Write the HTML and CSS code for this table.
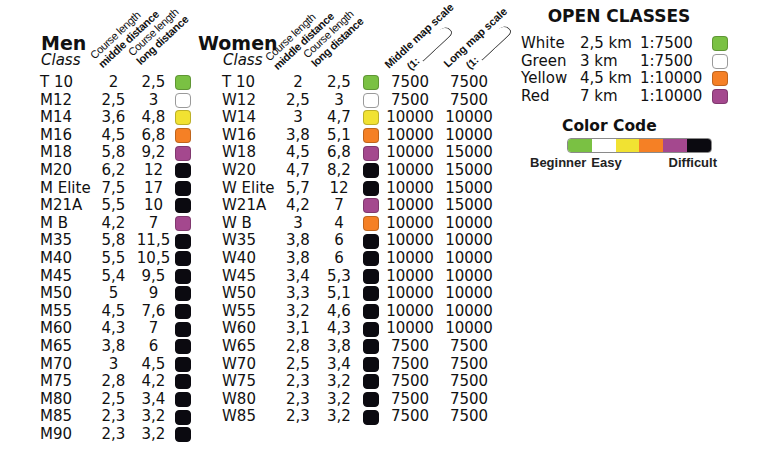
FILE: index.html
```html
<!DOCTYPE html>
<html>
<head>
<meta charset="utf-8">
<link rel="stylesheet" href="styles.css">
</head>
<body>
<div class="page">
  <div class="tbl men">
    <div class="head-title"><div class="big">Men</div><div class="sub">Class</div></div>
    <div class="rot"><div class="lab m-mid"><div class="l1">Course length</div><div class="l2">middle distance</div></div></div>
    <div class="rot"><div class="lab m-long"><div class="l1">Course length</div><div class="l2">long distance</div></div></div>
    <div></div>

    <div class="cls">T 10</div><div class="num">2</div><div class="num">2,5</div><div class="sw green"></div>
    <div class="cls">M12</div><div class="num">2,5</div><div class="num">3</div><div class="sw white"></div>
    <div class="cls">M14</div><div class="num">3,6</div><div class="num">4,8</div><div class="sw yellow"></div>
    <div class="cls">M16</div><div class="num">4,5</div><div class="num">6,8</div><div class="sw orange"></div>
    <div class="cls">M18</div><div class="num">5,8</div><div class="num">9,2</div><div class="sw purple"></div>
    <div class="cls">M20</div><div class="num">6,2</div><div class="num">12</div><div class="sw black"></div>
    <div class="cls">M Elite</div><div class="num">7,5</div><div class="num">17</div><div class="sw black"></div>
    <div class="cls">M21A</div><div class="num">5,5</div><div class="num">10</div><div class="sw black"></div>
    <div class="cls">M B</div><div class="num">4,2</div><div class="num">7</div><div class="sw purple"></div>
    <div class="cls">M35</div><div class="num">5,8</div><div class="num">11,5</div><div class="sw black"></div>
    <div class="cls">M40</div><div class="num">5,5</div><div class="num">10,5</div><div class="sw black"></div>
    <div class="cls">M45</div><div class="num">5,4</div><div class="num">9,5</div><div class="sw black"></div>
    <div class="cls">M50</div><div class="num">5</div><div class="num">9</div><div class="sw black"></div>
    <div class="cls">M55</div><div class="num">4,5</div><div class="num">7,6</div><div class="sw black"></div>
    <div class="cls">M60</div><div class="num">4,3</div><div class="num">7</div><div class="sw black"></div>
    <div class="cls">M65</div><div class="num">3,8</div><div class="num">6</div><div class="sw black"></div>
    <div class="cls">M70</div><div class="num">3</div><div class="num">4,5</div><div class="sw black"></div>
    <div class="cls">M75</div><div class="num">2,8</div><div class="num">4,2</div><div class="sw black"></div>
    <div class="cls">M80</div><div class="num">2,5</div><div class="num">3,4</div><div class="sw black"></div>
    <div class="cls">M85</div><div class="num">2,3</div><div class="num">3,2</div><div class="sw black"></div>
    <div class="cls">M90</div><div class="num">2,3</div><div class="num">3,2</div><div class="sw black"></div>
  </div>

  <div class="tbl women">
    <div class="head-title"><div class="big wbig">Women</div><div class="sub">Class</div></div>
    <div class="rot"><div class="lab w-mid"><div class="l1">Course length</div><div class="l2">middle distance</div></div></div>
    <div class="rot"><div class="lab w-long"><div class="l1">Course length</div><div class="l2">long distance</div></div></div>
    <div></div>
    <div class="rot"><div class="lab map map-mid"><div class="l2">Middle map scale</div><div class="l3">(1:<span class="brk"></span></div></div></div>
    <div class="rot"><div class="lab map map-long"><div class="l2">Long map scale</div><div class="l3">(1:<span class="brk"></span></div></div></div>

    <div class="cls">T 10</div><div class="num">2</div><div class="num">2,5</div><div class="sw green"></div><div class="num">7500</div><div class="num">7500</div>
    <div class="cls">W12</div><div class="num">2,5</div><div class="num">3</div><div class="sw white"></div><div class="num">7500</div><div class="num">7500</div>
    <div class="cls">W14</div><div class="num">3</div><div class="num">4,7</div><div class="sw yellow"></div><div class="num">10000</div><div class="num">10000</div>
    <div class="cls">W16</div><div class="num">3,8</div><div class="num">5,1</div><div class="sw orange"></div><div class="num">10000</div><div class="num">10000</div>
    <div class="cls">W18</div><div class="num">4,5</div><div class="num">6,8</div><div class="sw purple"></div><div class="num">10000</div><div class="num">15000</div>
    <div class="cls">W20</div><div class="num">4,7</div><div class="num">8,2</div><div class="sw black"></div><div class="num">10000</div><div class="num">15000</div>
    <div class="cls">W Elite</div><div class="num">5,7</div><div class="num">12</div><div class="sw black"></div><div class="num">10000</div><div class="num">15000</div>
    <div class="cls">W21A</div><div class="num">4,2</div><div class="num">7</div><div class="sw purple"></div><div class="num">10000</div><div class="num">15000</div>
    <div class="cls">W B</div><div class="num">3</div><div class="num">4</div><div class="sw orange"></div><div class="num">10000</div><div class="num">10000</div>
    <div class="cls">W35</div><div class="num">3,8</div><div class="num">6</div><div class="sw black"></div><div class="num">10000</div><div class="num">10000</div>
    <div class="cls">W40</div><div class="num">3,8</div><div class="num">6</div><div class="sw black"></div><div class="num">10000</div><div class="num">10000</div>
    <div class="cls">W45</div><div class="num">3,4</div><div class="num">5,3</div><div class="sw black"></div><div class="num">10000</div><div class="num">10000</div>
    <div class="cls">W50</div><div class="num">3,3</div><div class="num">5,1</div><div class="sw black"></div><div class="num">10000</div><div class="num">10000</div>
    <div class="cls">W55</div><div class="num">3,2</div><div class="num">4,6</div><div class="sw black"></div><div class="num">10000</div><div class="num">10000</div>
    <div class="cls">W60</div><div class="num">3,1</div><div class="num">4,3</div><div class="sw black"></div><div class="num">10000</div><div class="num">10000</div>
    <div class="cls">W65</div><div class="num">2,8</div><div class="num">3,8</div><div class="sw black"></div><div class="num">7500</div><div class="num">7500</div>
    <div class="cls">W70</div><div class="num">2,5</div><div class="num">3,4</div><div class="sw black"></div><div class="num">7500</div><div class="num">7500</div>
    <div class="cls">W75</div><div class="num">2,3</div><div class="num">3,2</div><div class="sw black"></div><div class="num">7500</div><div class="num">7500</div>
    <div class="cls">W80</div><div class="num">2,3</div><div class="num">3,2</div><div class="sw black"></div><div class="num">7500</div><div class="num">7500</div>
    <div class="cls">W85</div><div class="num">2,3</div><div class="num">3,2</div><div class="sw black"></div><div class="num">7500</div><div class="num">7500</div>
  </div>

  <div class="open">
    <div class="open-t">OPEN CLASSES</div>
    <div class="olist">
      <div>White</div><div>2,5 km</div><div>1:7500</div><div class="sw green"></div>
      <div>Green</div><div>3 km</div><div>1:7500</div><div class="sw white"></div>
      <div>Yellow</div><div>4,5 km</div><div>1:10000</div><div class="sw orange"></div>
      <div>Red</div><div>7 km</div><div>1:10000</div><div class="sw purple"></div>
    </div>
    <div class="cc-t">Color Code</div>
    <div class="bar">
      <div class="seg green"></div><div class="seg white"></div><div class="seg yellow"></div><div class="seg orange"></div><div class="seg purple"></div><div class="seg black"></div>
    </div>
    <div class="bar-labels"><span>Beginner</span><span class="easy">Easy</span><span class="diff">Difficult</span></div>
  </div>
</div>
</body>
</html>
```

FILE: styles.css
```css
body {
  margin: 0;
  background: #fff;
  font-family: "DejaVu Sans", sans-serif;
  font-size: 15px;
  color: #111;
}
.page {
  display: flex;
  align-items: flex-start;
  width: 768px;
  height: 452px;
  padding-left: 40px;
  box-sizing: border-box;
  overflow: hidden;
}
.tbl {
  display: grid;
  grid-template-rows: 74px;
  grid-auto-rows: 17.6px;
  align-items: center;
  line-height: 17.6px;
}
.men {
  grid-template-columns: 55px 37px 43px 16px;
}
.women {
  margin-left: 31px;
  grid-template-columns: 57px 38px 44px 18px 62px 56px;
}
.num { text-align: center; white-space: nowrap; }
.cls { text-align: left; white-space: nowrap; }

.head-title {
  align-self: end;
  padding-bottom: 6px;
  white-space: nowrap;
}
.big {
  font-weight: bold;
  font-size: 19px;
  line-height: 19px;
  padding-left: 1px;
}
.wbig { margin-left: -25px; }
.sub {
  font-style: italic;
  font-size: 15px;
  line-height: 15px;
  padding-left: 1px;
}

.rot {
  align-self: end;
  height: 74px;
  display: flex;
  align-items: flex-end;
}
.lab {
  width: max-content;
  white-space: nowrap;
  transform: rotate(-43deg);
  transform-origin: 0 100%;
  font-family: "Liberation Sans", Arial, sans-serif;
  line-height: 12px;
  color: #111;
}
.m-mid { margin-left: 9px; margin-bottom: 4px; }
.m-long { margin-left: 10px; margin-bottom: 7px; }
.w-mid { margin-left: 0; margin-bottom: 2px; }
.w-long { margin-left: 0; margin-bottom: 5px; }
.l1 { font-size: 11px; letter-spacing: -0.35px; }
.l2 { font-size: 11px; font-weight: bold; letter-spacing: -0.35px; }
.map .l2 { font-size: 11px; line-height: 13px; letter-spacing: -0.1px; }
.map-mid { margin-left: 23px; margin-bottom: -9px; }
.map-long { margin-left: 20px; margin-bottom: -8px; }
.l3 {
  font-size: 10.5px;
  font-weight: bold;
  line-height: 13px;
  margin-top: 3px;
  padding-left: 15px;
}
.brk {
  display: inline-block;
  width: 42px;
  height: 12px;
  margin-left: 2px;
  vertical-align: -2px;
  box-sizing: border-box;
  border-bottom: 1px solid #444;
  border-right: 1.4px solid #444;
  border-radius: 0 8px 6px 0 / 0 7px 4px 0;
}

.sw {
  width: 16px;
  height: 15px;
  border-radius: 4px;
  box-sizing: border-box;
  border: 1px solid rgba(0, 0, 0, 0.22);
  justify-self: end;
}
.green { background: #7ac143; }
.white { background: #fff; border-color: #9a9a9a; }
.yellow { background: #f1e232; }
.orange { background: #f58025; }
.purple { background: #a4488e; }
.black { background: #0b0a10; border-color: #0b0a10; }

.open {
  margin-left: 24px;
  width: 200px;
  padding-top: 6px;
}
.open-t {
  width: 196px;
  text-align: center;
  font-weight: bold;
  font-size: 17px;
  line-height: 20px;
}
.olist {
  display: grid;
  grid-template-columns: 59px 60px 72px 16px;
  grid-auto-rows: 17.6px;
  align-items: center;
  line-height: 17.6px;
  margin-top: 9px;
  white-space: nowrap;
}
.cc-t {
  font-weight: bold;
  font-size: 15.5px;
  line-height: 18px;
  margin-top: 12px;
  margin-left: 41px;
}
.bar {
  display: flex;
  width: 145px;
  height: 15px;
  margin-left: 46px;
  margin-top: 3px;
  border-radius: 4px;
  overflow: hidden;
  box-sizing: border-box;
  border: 1px solid #8a8a8a;
}
.seg { flex: 1; border: none; }
.bar-labels {
  display: flex;
  width: 187px;
  margin-left: 9px;
  margin-top: 3px;
  font-family: "Liberation Sans", Arial, sans-serif;
  font-weight: bold;
  font-size: 13px;
  line-height: 14px;
  color: #222;
}
.easy { margin-left: 5px; }
.diff { margin-left: auto; }
```
